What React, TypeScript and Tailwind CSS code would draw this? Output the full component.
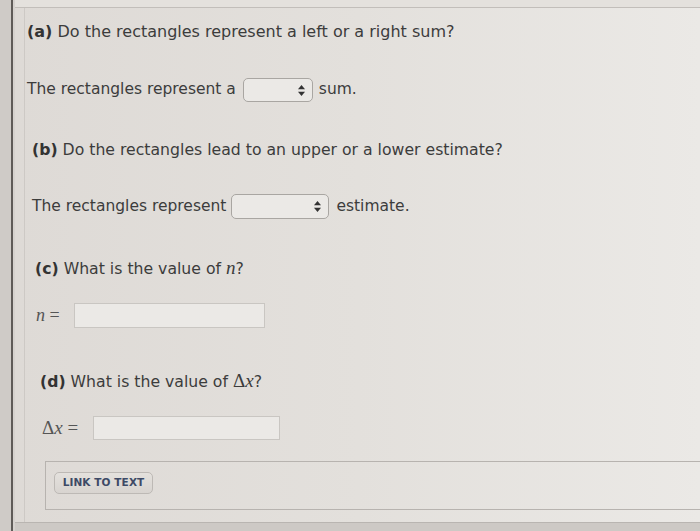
// Little up/down select stub
function Picker({ width }: { width: string }) {
  return (
    <span
      className={`inline-flex items-center justify-end ${width} rounded-[5px] border border-[#a9a6a2] bg-[#ebe9e6] pr-[7px]`}
    >
      <svg width="7" height="11" viewBox="0 0 7 11" className="text-[#333]">
        <path d="M3.5 0 L7 4.2 L0 4.2 Z" fill="currentColor" />
        <path d="M0 6.8 L7 6.8 L3.5 11 Z" fill="currentColor" />
      </svg>
    </span>
  );
}

function Question({ tag, children, pad, size }: { tag: string; children: React.ReactNode; pad: string; size: string }) {
  return (
    <p className={`${pad} ${size} h-[20px] leading-[20px] text-[#3c3c3c]`}>
      <b className="text-[#333]">({tag})</b> {children}
    </p>
  );
}

const serif = { fontFamily: '"Liberation Serif", "DejaVu Serif", serif' };

export default function App() {
  return (
    <div
      className="w-[700px] h-[531px] overflow-hidden flex bg-[#d3cfcb]"
      style={{ fontFamily: '"DejaVu Sans", Verdana, sans-serif' }}
    >
      {/* left gutter */}
      <div className="w-[11px] shrink-0 bg-[#cfcbc7]" />
      <div className="w-[2px] shrink-0 bg-[#5f5b58]" />
      <div className="w-[2px] shrink-0 bg-[#d6d2ce]" />

      <div className="flex-1 flex flex-col">
        <div className="h-[8px] shrink-0 bg-[#e4e1dd] border-b border-[#c2beba]" />
        <div className="h-[515px] shrink-0 flex bg-gradient-to-r from-[#dedad6] via-[#e3e0dc] to-[#ebe9e6] border-b border-[#b9b5b1]">
          <div className="w-[10px] shrink-0 border-r border-[#cdc9c5]" />
          <div className="flex-1 flex flex-col pt-[14px]">
            <Question tag="a" pad="pl-[2px]" size="text-[16px]">
              Do the rectangles represent a left or a right sum?
            </Question>

            <div className="mt-[36px] h-[24px] pl-[2px] flex items-center text-[15.5px] text-[#3c3c3c]">
              <span>The rectangles represent a</span>
              <span className="ml-[7px] flex">
                <Picker width="w-[70px] h-[24px]" />
              </span>
              <span className="ml-[6px]">sum.</span>
            </div>

            <div className="mt-[38px]">
              <Question tag="b" pad="pl-[7px]" size="text-[15.7px]">
                Do the rectangles lead to an upper or a lower estimate?
              </Question>
            </div>

            <div className="mt-[34px] h-[25px] pl-[7px] flex items-center text-[15.5px] text-[#3c3c3c]">
              <span>The rectangles represent</span>
              <span className="ml-[5px] flex">
                <Picker width="w-[98px] h-[25px]" />
              </span>
              <span className="ml-[7px]">estimate.</span>
            </div>

            <div className="mt-[39px]">
              <Question tag="c" pad="pl-[10px]" size="text-[15.7px]">
                What is the value of{' '}
                <i style={serif} className="text-[19px]">n</i>?
              </Question>
            </div>

            <div className="mt-[25px] h-[25px] pl-[11px] flex items-center">
              <span className="w-[38px] text-[18px] text-[#555]" style={serif}>
                <i>n</i> =
              </span>
              <span className="w-[191px] h-[25px] border border-[#c9c6c2] bg-[#ebe9e6]" />
            </div>

            <div className="mt-[43px]">
              <Question tag="d" pad="pl-[15px]" size="text-[15.7px]">
                What is the value of{' '}
                <span style={serif} className="text-[19px]">
                  Δ<i>x</i>
                </span>
                ?
              </Question>
            </div>

            <div className="mt-[25px] h-[24px] pl-[17px] flex items-center">
              <span className="w-[51px] text-[19px] text-[#555]" style={serif}>
                Δ<i>x</i> =
              </span>
              <span className="w-[187px] h-[24px] border border-[#c9c6c2] bg-[#ebe9e6]" />
            </div>

            <div className="mt-[21px] ml-[20px] -mr-[10px] h-[49px] border border-[#b7b3af] pl-[8px] pt-[7px]">
              <button className="h-[22px] w-[99px] rounded-[5px] border border-[#bdb9b5] bg-gradient-to-b from-[#e4e1dd] to-[#d8d4d0] text-[10.5px] font-bold text-[#3d4a66] tracking-[0.1px]">
                LINK TO TEXT
              </button>
            </div>
          </div>
        </div>
        <div className="flex-1 bg-[#cdc9c5]" />
      </div>
    </div>
  );
}
